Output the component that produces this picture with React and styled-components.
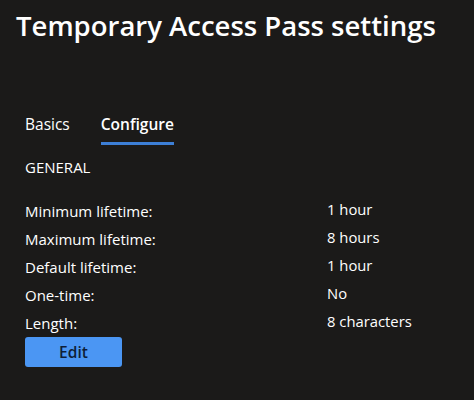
import { Fragment } from "react";
import styled, { createGlobalStyle } from "styled-components";

const GlobalStyle = createGlobalStyle`
  html, body {
    margin: 0;
    padding: 0;
    background: #1b1a19;
  }
  body {
    font-family: "Open Sans", "Noto Sans", sans-serif;
    color: #ffffff;
  }
`;

const Page = styled.div`
  width: 474px;
  height: 400px;
  background: #1b1a19;
  overflow: hidden;
`;

const Title = styled.h1`
  margin: 0;
  padding: 6px 0 0 16px;
  font-size: 27.5px;
  line-height: 40px;
  font-weight: 600;
  white-space: nowrap;
  color: #ffffff;
`;

const Body = styled.div`
  padding: 67px 0 0 25px;
`;

const Tabs = styled.div`
  display: flex;
  gap: 31px;
`;

const Tab = styled.div`
  font-size: 15.5px;
  line-height: 22px;
  font-weight: ${(p) => (p.$active ? 600 : 400)};
  padding-bottom: 7px;
  border-bottom: 3px solid ${(p) => (p.$active ? "#3d7fd6" : "transparent")};
  color: #ffffff;
`;

const Section = styled.div`
  margin-top: 12px;
  font-size: 15px;
  line-height: 20px;
  color: #ffffff;
`;

const List = styled.div`
  margin-top: 24px;
  display: grid;
  grid-template-columns: 302px 1fr;
  grid-auto-rows: 28px;
  font-size: 15px;
  line-height: 20px;
`;

const Label = styled.div`
  color: #ffffff;
`;

const Value = styled.div`
  color: #ffffff;
  font-size: 14.8px;
  margin-top: -2px;
`;

const Button = styled.button`
  display: block;
  margin-top: -4px;
  width: 97px;
  height: 30px;
  border: none;
  border-radius: 3px;
  background: #4b96f3;
  color: #0e1e38;
  font-family: "Open Sans", "Noto Sans", sans-serif;
  font-size: 15.5px;
  font-weight: 600;
  padding: 0;
`;

const rows = [
  ["Minimum lifetime:", "1 hour"],
  ["Maximum lifetime:", "8 hours"],
  ["Default lifetime:", "1 hour"],
  ["One-time:", "No"],
  ["Length:", "8 characters"],
];

export default function App() {
  return (
    <Page>
      <GlobalStyle />
      <Title>Temporary Access Pass settings</Title>
      <Body>
        <Tabs>
          <Tab>Basics</Tab>
          <Tab $active>Configure</Tab>
        </Tabs>
        <Section>GENERAL</Section>
        <List>
          {rows.map(([label, value]) => (
            <Fragment key={label}>
              <Label>{label}</Label>
              <Value>{value}</Value>
            </Fragment>
          ))}
        </List>
        <Button>Edit</Button>
      </Body>
    </Page>
  );
}
